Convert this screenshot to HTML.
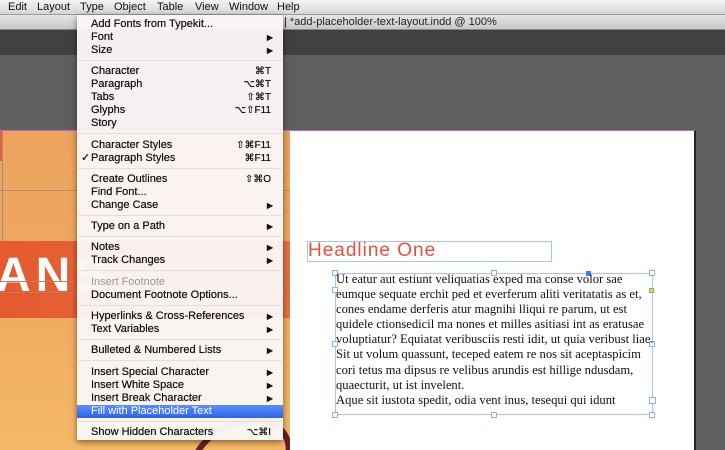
<!DOCTYPE html>
<html><head><style>
*{margin:0;padding:0;box-sizing:border-box}
html,body{width:725px;height:450px;overflow:hidden}
body{position:relative;background:#5f5f5f;font-family:"Liberation Sans",sans-serif}
.abs{position:absolute}
#mb{left:0;top:0;width:725px;height:15px;background:linear-gradient(#f4f4f4,#d6d6d6);border-bottom:1px solid #999;font-size:11px;color:#111}
#mb span{position:absolute;top:1px}
#tab{left:0;top:15px;width:725px;height:15px;background:linear-gradient(#e6e6e6,#c8c8c8);border-bottom:1px solid #888;font-size:11px;color:#222}
#dk{left:0;top:30px;width:725px;height:25px;background:#414141}
#page{left:283px;top:130px;width:413px;height:320px;background:#fff;border-top:1px solid #c06ad0;border-right:2px solid #222}
#art{left:0;top:130px;width:290px;height:320px;background:linear-gradient(180deg,#eba35e 0%,#f0a960 50%,#f4b867 100%);border-top:1px solid #c06ad0;overflow:hidden}
#menu{left:77px;top:15px;width:206px;height:425px;background:rgba(250,246,245,0.97);box-shadow:0 2px 6px rgba(0,0,0,.5);font-size:11px;color:#111;padding-top:3px;text-shadow:0 0 0.4px #111}
.it{position:relative;height:13px;line-height:13px;padding-left:14px}
.it .r{position:absolute;right:12px;top:0;font-size:10px}
.it .a{position:absolute;right:10px;top:0;font-size:8px}
.sep{height:8.3px;position:relative}
.sep:after{content:"";position:absolute;left:1px;right:1px;top:3px;height:1px;background:#e2dedd}
.dis{color:#999;text-shadow:none}
.hl{background:linear-gradient(#5f8ef5,#2f63e8);color:#fff;text-shadow:none}
#body{left:336px;top:272px;width:330px;font-family:"Liberation Serif",serif;font-size:12.6px;line-height:15.1px;color:#111;white-space:nowrap}
.h{width:6px;height:6px;border:1px solid #8ab0f0;background:#fff;position:absolute}
</style></head><body>
<div id="mb" class="abs"><span style="left:8px">Edit</span><span style="left:37px">Layout</span><span style="left:80px">Type</span><span style="left:114px">Object</span><span style="left:157px">Table</span><span style="left:195px">View</span><span style="left:229px">Window</span><span style="left:277px">Help</span></div>
<div id="tab" class="abs"><span style="position:absolute;left:284px;top:1px">| *add-placeholder-text-layout.indd @ 100%</span></div>
<div id="dk" class="abs"></div>
<div id="page" class="abs"></div>
<div id="art" class="abs">
 <div class="abs" style="left:0;top:0;width:290px;height:60px;border-bottom:1px solid #b88a6a"></div>
 <div class="abs" style="left:0;top:0;width:3px;height:30px;background:#e2603a"></div>
 <div class="abs" style="left:0;top:0;width:3px;height:110px;border-right:1px solid #a88"></div>
 <div class="abs" style="left:0;top:110px;width:290px;height:77px;background:linear-gradient(90deg,#e55a30,#ea7040)"></div>
 <div class="abs" style="left:-4px;top:117px;color:#fff;font-size:48px;font-weight:bold;letter-spacing:5px">ANS</div>
 <div class="abs" style="left:0;top:161px;width:290px;height:1px;background:#c07a60"></div>
 <div class="abs" style="left:0;top:150px;width:290px;height:1px;background:#c07a60"></div>
 <div class="abs" style="left:185px;top:290px;width:110px;height:80px;border:6px solid #6a2020;border-radius:50%;transform:rotate(-30deg)"></div>
</div>
<div class="abs" style="left:307px;top:241px;width:245px;height:21px;border:1px solid #a8c4f0"></div>
<div class="abs" style="left:308px;top:240px;color:#ea4c40;font-size:19px;letter-spacing:1px">Headline One</div>
<div class="abs" style="left:335px;top:273px;width:318px;height:142px;border:1px solid #a8c4f0"></div>
<div class="h" style="left:332px;top:270px"></div><div class="h" style="left:491px;top:270px"></div><div class="h" style="left:649px;top:270px"></div>
<div class="h" style="left:332px;top:341px"></div><div class="h" style="left:649px;top:341px"></div>
<div class="h" style="left:332px;top:412px"></div><div class="h" style="left:491px;top:412px"></div><div class="h" style="left:649px;top:412px"></div>
<div class="h" style="left:332px;top:287px"></div><div class="h" style="left:649px;top:397px;width:7px;height:7px"></div>
<div class="abs" style="left:586px;top:271px;width:5px;height:5px;background:#3a7ef0"></div>
<div class="abs" style="left:649px;top:288px;width:5px;height:5px;background:#e8e020;border:1px solid #999"></div>
<div id="body" class="abs">Ut eatur aut estiunt veliquatias exped ma conse volor sae<br>eumque sequate erchit ped et everferum aliti veritatatis as et,<br>cones endame derferis atur magnihi lliqui re parum, ut est<br>quidele ctionsedicil ma nones et milles asitiasi int as eratusae<br>voluptiatur? Equiatat veribusciis resti idit, ut quia veribust liae.<br>Sit ut volum quassunt, teceped eatem re nos sit aceptaspicim<br>cori tetus ma dipsus re velibus arundis est hillige ndusdam,<br>quaecturit, ut ist invelent.<br>Aque sit iustota spedit, odia vent inus, tesequi qui idunt</div>
<div id="menu" class="abs">
<div class="it">Add Fonts from Typekit...</div>
<div class="it">Font<span class="a">▶</span></div>
<div class="it">Size<span class="a">▶</span></div>
<div class="sep"></div>
<div class="it">Character<span class="r">⌘T</span></div>
<div class="it">Paragraph<span class="r">⌥⌘T</span></div>
<div class="it">Tabs<span class="r">⇧⌘T</span></div>
<div class="it">Glyphs<span class="r">⌥⇧F11</span></div>
<div class="it">Story</div>
<div class="sep"></div>
<div class="it">Character Styles<span class="r">⇧⌘F11</span></div>
<div class="it"><span style="position:absolute;left:4px">✓</span>Paragraph Styles<span class="r">⌘F11</span></div>
<div class="sep"></div>
<div class="it">Create Outlines<span class="r">⇧⌘O</span></div>
<div class="it">Find Font...</div>
<div class="it">Change Case<span class="a">▶</span></div>
<div class="sep"></div>
<div class="it">Type on a Path<span class="a">▶</span></div>
<div class="sep"></div>
<div class="it">Notes<span class="a">▶</span></div>
<div class="it">Track Changes<span class="a">▶</span></div>
<div class="sep"></div>
<div class="it dis">Insert Footnote</div>
<div class="it">Document Footnote Options...</div>
<div class="sep"></div>
<div class="it">Hyperlinks &amp; Cross-References<span class="a">▶</span></div>
<div class="it">Text Variables<span class="a">▶</span></div>
<div class="sep"></div>
<div class="it">Bulleted &amp; Numbered Lists<span class="a">▶</span></div>
<div class="sep"></div>
<div class="it">Insert Special Character<span class="a">▶</span></div>
<div class="it">Insert White Space<span class="a">▶</span></div>
<div class="it">Insert Break Character<span class="a">▶</span></div>
<div class="it hl">Fill with Placeholder Text</div>
<div class="sep"></div>
<div class="it">Show Hidden Characters<span class="r">⌥⌘I</span></div>
</div>
</body></html>
